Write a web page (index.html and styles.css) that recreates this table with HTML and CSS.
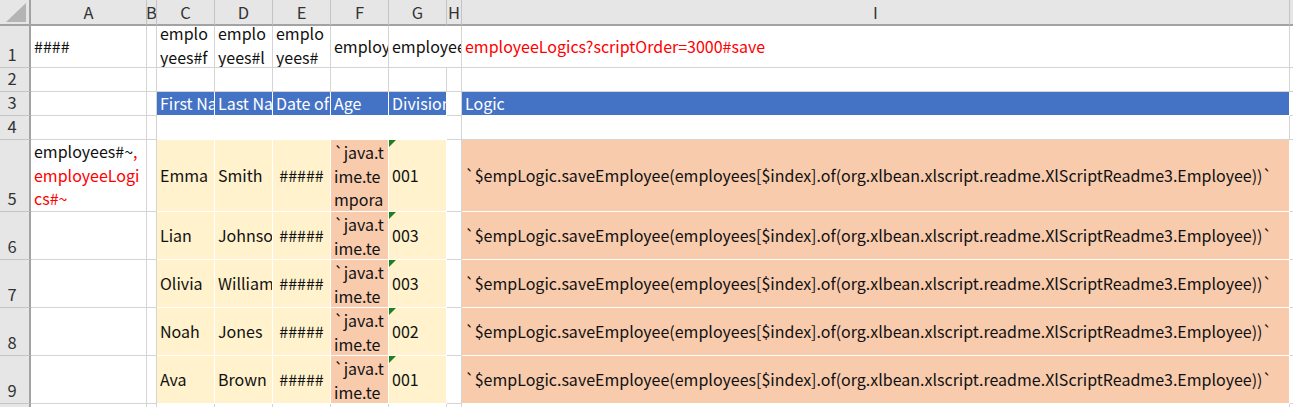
FILE: index.html
```html
<!DOCTYPE html>
<html lang="ja">
<head>
<meta charset="utf-8">
<title>Sheet</title>
<link rel="stylesheet" href="styles.css">
</head>
<body>
<div class="sheet">
  <div class="corner"></div>
  <div class="ch">A</div>
  <div class="ch">B</div>
  <div class="ch">C</div>
  <div class="ch">D</div>
  <div class="ch">E</div>
  <div class="ch">F</div>
  <div class="ch">G</div>
  <div class="ch">H</div>
  <div class="ch">I</div>
  <div class="ch rest"></div>

  <div class="rh">1</div>
  <div class="c">####</div>
  <div class="c"></div>
  <div class="c wrap top1">employees#firstName</div>
  <div class="c wrap top1">employees#lastName</div>
  <div class="c wrap top1">employees#dateOfBirth</div>
  <div class="c">employees#age</div>
  <div class="c span2">employees#division</div>
  <div class="c red">employeeLogics?scriptOrder=3000#save</div>
  <div class="c rest"></div>

  <div class="rh">2</div>
  <div class="c"></div><div class="c"></div><div class="c"></div><div class="c"></div><div class="c"></div><div class="c"></div><div class="c"></div><div class="c"></div><div class="c"></div>
  <div class="c rest"></div>

  <div class="rh">3</div>
  <div class="c"></div>
  <div class="c"></div>
  <div class="c blue">First Name</div>
  <div class="c blue">Last Name</div>
  <div class="c blue">Date of Birth</div>
  <div class="c blue">Age</div>
  <div class="c blue">Division</div>
  <div class="c"></div>
  <div class="c blue">Logic</div>
  <div class="c rest"></div>

  <div class="rh">4</div>
  <div class="c"></div><div class="c"></div>
  <div class="c nb"></div><div class="c nb"></div><div class="c nb"></div><div class="c nb"></div><div class="c nb"></div>
  <div class="c"></div><div class="c"></div>
  <div class="c rest"></div>

  <div class="rh">5</div>
  <div class="c multi"><span>employees#~<span class="red-t">,employeeLogics#~</span></span></div>
  <div class="c"></div>
  <div class="c yel">Emma</div>
  <div class="c yel">Smith</div>
  <div class="c yel hash">#####</div>
  <div class="c sal wrap topd">`java.time.temporal.ChronoUnit.YEARS.between($e.dateOfBirth, $today)`</div>
  <div class="c yel flag">001</div>
  <div class="c"></div>
  <div class="c sal">`$empLogic.saveEmployee(employees[$index].of(org.xlbean.xlscript.readme.XlScriptReadme3.Employee))`</div>
  <div class="c rest"></div>

  <div class="rh">6</div>
  <div class="c"></div>
  <div class="c"></div>
  <div class="c yel">Lian</div>
  <div class="c yel">Johnson</div>
  <div class="c yel hash">#####</div>
  <div class="c sal wrap topd">`java.time.temporal.ChronoUnit.YEARS.between($e.dateOfBirth, $today)`</div>
  <div class="c yel flag">003</div>
  <div class="c"></div>
  <div class="c sal">`$empLogic.saveEmployee(employees[$index].of(org.xlbean.xlscript.readme.XlScriptReadme3.Employee))`</div>
  <div class="c rest"></div>

  <div class="rh">7</div>
  <div class="c"></div>
  <div class="c"></div>
  <div class="c yel">Olivia</div>
  <div class="c yel">Williams</div>
  <div class="c yel hash">#####</div>
  <div class="c sal wrap topd">`java.time.temporal.ChronoUnit.YEARS.between($e.dateOfBirth, $today)`</div>
  <div class="c yel flag">003</div>
  <div class="c"></div>
  <div class="c sal">`$empLogic.saveEmployee(employees[$index].of(org.xlbean.xlscript.readme.XlScriptReadme3.Employee))`</div>
  <div class="c rest"></div>

  <div class="rh">8</div>
  <div class="c"></div>
  <div class="c"></div>
  <div class="c yel">Noah</div>
  <div class="c yel">Jones</div>
  <div class="c yel hash">#####</div>
  <div class="c sal wrap topd">`java.time.temporal.ChronoUnit.YEARS.between($e.dateOfBirth, $today)`</div>
  <div class="c yel flag">002</div>
  <div class="c"></div>
  <div class="c sal">`$empLogic.saveEmployee(employees[$index].of(org.xlbean.xlscript.readme.XlScriptReadme3.Employee))`</div>
  <div class="c rest"></div>

  <div class="rh">9</div>
  <div class="c"></div>
  <div class="c"></div>
  <div class="c yel">Ava</div>
  <div class="c yel">Brown</div>
  <div class="c yel hash">#####</div>
  <div class="c sal wrap topd">`java.time.temporal.ChronoUnit.YEARS.between($e.dateOfBirth, $today)`</div>
  <div class="c yel flag">001</div>
  <div class="c"></div>
  <div class="c sal">`$empLogic.saveEmployee(employees[$index].of(org.xlbean.xlscript.readme.XlScriptReadme3.Employee))`</div>
  <div class="c rest"></div>

  <div class="rh">10</div>
  <div class="c"></div><div class="c"></div><div class="c"></div><div class="c"></div><div class="c"></div><div class="c"></div><div class="c"></div><div class="c"></div><div class="c"></div>
  <div class="c rest"></div>
</div>
</body>
</html>
```

FILE: styles.css
```css
* { box-sizing: border-box; }
html, body { margin: 0; padding: 0; background: #fff; }
body {
  font-family: "Noto Sans CJK JP", "Noto Sans", sans-serif;
  font-size: 16px;
  color: #111;
  overflow: hidden;
}
.sheet {
  display: grid;
  grid-template-columns: 31px 116px 10px 58px 58px 58px 58px 58px 15px 828px 1fr;
  grid-template-rows: 26px 42px 24px 24px 24px 72px 48px 48px 48px 48px 30px;
  width: 1293px;
  height: 407px;
  overflow: hidden;
}
.corner {
  background: #e6e6e6;
  border-right: 2px solid #a3a3a3;
  border-bottom: 2px solid #a3a3a3;
  position: relative;
}
.corner::after {
  content: "";
  position: absolute;
  left: 6px;
  top: 3px;
  width: 20px;
  height: 19px;
  background: #b4b4b4;
  clip-path: polygon(100% 0, 100% 100%, 0 100%);
}
.ch {
  background: #e6e6e6;
  border-right: 1px solid #c4c4c4;
  border-bottom: 2px solid #a3a3a3;
  display: flex;
  align-items: center;
  justify-content: center;
  color: #333;
  font-size: 16.5px;
  line-height: 22px;
  overflow: hidden;
}
.ch.rest { border-right: none; }
.ch:nth-last-child(2) { border-right: 1px solid #a3a3a3; }
.rh {
  background: #e6e6e6;
  border-right: 2px solid #a3a3a3;
  border-bottom: 1px solid #c4c4c4;
  display: flex;
  align-items: flex-end;
  justify-content: center;
  padding: 0 5px 1px 0;
  color: #333;
  font-size: 16.5px;
  line-height: 23.5px;
  overflow: hidden;
}
.c {
  border-right: 1px solid #d4d4d4;
  border-bottom: 1px solid #d4d4d4;
  padding: 0 3px;
  display: flex;
  align-items: center;
  white-space: nowrap;
  overflow: hidden;
  line-height: 23.5px;
  position: relative;
}
.c.rest { border-right: none; }
.span2 { grid-column: span 2; }
.red { color: #ff0000; }
.red-t { color: #ff0000; }
.blue { background: #4472c4; color: #fff; border-color: #fff; }
.yel { background: #fff2cc; border-color: #fff; }
.sal { background: #f8cbad; border-color: #fff; }
.nb { border-color: #fff; }
.hash { justify-content: center; padding: 0; }
.wrap {
  display: block;
  white-space: normal;
  word-break: break-all;
}
.top1::before { content: ""; display: block; margin-top: -4px; }
.topd { padding-top: 1px; }
.multi { white-space: normal; word-break: break-all; }
.flag::before {
  content: "";
  position: absolute;
  left: 0;
  top: 0;
  border-top: 7px solid #1e7f1e;
  border-right: 7px solid transparent;
}
```
